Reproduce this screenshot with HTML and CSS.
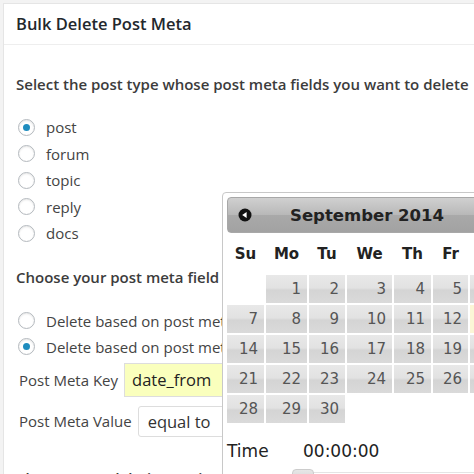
FILE: index.html
```html
<!DOCTYPE html>
<html>
<head>
<meta charset="utf-8">
<link rel="stylesheet" href="styles.css">
</head>
<body>
<div class="panel">
  <h3 class="panel-title">Bulk Delete Post Meta</h3>
  <div class="panel-body">
    <h4 class="section-title">Select the post type whose post meta fields you want to delete</h4>
    <ul class="radio-list">
      <li class="radio-row"><span class="radio checked"></span><span>post</span></li>
      <li class="radio-row"><span class="radio"></span><span>forum</span></li>
      <li class="radio-row"><span class="radio"></span><span>topic</span></li>
      <li class="radio-row"><span class="radio"></span><span>reply</span></li>
      <li class="radio-row"><span class="radio"></span><span>docs</span></li>
    </ul>
    <h4 class="section-title second">Choose your post meta field settings</h4>
    <ul class="radio-list meta-list">
      <li class="radio-row"><span class="radio"></span><span>Delete based on post meta key name only</span></li>
      <li class="radio-row"><span class="radio checked"></span><span>Delete based on post meta key name and value</span></li>
    </ul>
    <div class="field-row key-row">
      <span class="field-label">Post Meta Key</span>
      <span class="text-input autofill">date_from</span>
    </div>
    <div class="field-row value-row">
      <span class="field-label">Post Meta Value</span>
      <span class="select-box">equal to</span>
    </div>
    <h4 class="section-title third">Choose your deletion options</h4>
  </div>
</div>

<div class="datepicker">
  <div class="dp-header">
    <span class="dp-prev">
      <svg width="14" height="14" viewBox="0 0 14 14"><circle cx="7" cy="7" r="6.5" fill="#111"/><path d="M4.2 7 L8.6 3.9 L8.6 10.1 Z" fill="#fff"/></svg>
    </span>
    <span class="dp-title">September 2014</span>
  </div>
  <div class="dp-grid dp-days">
    <span>Su</span><span>Mo</span><span>Tu</span><span>We</span><span>Th</span><span>Fr</span><span>Sa</span>
  </div>
  <div class="dp-grid dp-cells">
    <span class="empty"></span><span class="day">1</span><span class="day">2</span><span class="day">3</span><span class="day">4</span><span class="day">5</span><span class="day">6</span>
    <span class="day">7</span><span class="day">8</span><span class="day">9</span><span class="day">10</span><span class="day">11</span><span class="day">12</span><span class="day today">13</span>
    <span class="day">14</span><span class="day">15</span><span class="day">16</span><span class="day">17</span><span class="day">18</span><span class="day">19</span><span class="day">20</span>
    <span class="day">21</span><span class="day">22</span><span class="day">23</span><span class="day">24</span><span class="day">25</span><span class="day">26</span><span class="day">27</span>
    <span class="day">28</span><span class="day">29</span><span class="day">30</span><span class="empty"></span><span class="empty"></span><span class="empty"></span><span class="empty"></span>
  </div>
  <div class="dp-time">
    <span class="dp-time-label">Time</span>
    <span class="dp-time-value">00:00:00</span>
  </div>
  <div class="dp-slider"><span class="dp-handle"></span></div>
</div>
</body>
</html>
```

FILE: styles.css
```css
html, body {
  margin: 0;
  padding: 0;
}
body {
  background: #f3f3f3;
  width: 474px;
  height: 474px;
  overflow: hidden;
  position: relative;
  font-family: "Open Sans", "Liberation Sans", sans-serif;
  color: #444;
}
.panel {
  margin: 3px 0 0 3px;
  width: 640px;
  height: 600px;
  background: #fff;
  border: 1px solid #e5e5e5;
}
.panel-title {
  margin: 0;
  padding: 10px 12px;
  font-size: 16.5px;
  line-height: 20px;
  font-weight: 600;
  color: #23282d;
  border-bottom: 1px solid #eee;
}
.panel-body {
  padding: 0 12px;
}
.section-title {
  margin: 29px 0 0;
  font-size: 15px;
  line-height: 20px;
  font-weight: 600;
  color: #3c3c3c;
}
.section-title.second {
  margin-top: 20px;
}
.section-title.third {
  margin-top: 31px;
}
.radio-list {
  list-style: none;
  margin: 20px 0 0 2px;
  padding: 0;
}
.meta-list {
  margin-top: 21px;
}
.radio-row {
  display: flex;
  align-items: center;
  gap: 11px;
  height: 26.5px;
  font-size: 15px;
  color: #444;
}
.meta-list .radio-row {
  height: 26px;
}
.radio {
  width: 17px;
  height: 17px;
  box-sizing: border-box;
  border: 1px solid #b4b9be;
  border-radius: 50%;
  background: #fff;
  box-shadow: inset 0 1px 2px rgba(0,0,0,.1);
  display: flex;
  align-items: center;
  justify-content: center;
  flex: none;
}
.radio.checked::after {
  content: "";
  width: 7px;
  height: 7px;
  border-radius: 50%;
  background: #1e8cbe;
}
.field-row {
  display: flex;
  align-items: center;
  gap: 6px;
  margin-left: 3px;
  font-size: 15px;
  color: #444;
}
.key-row {
  margin-top: 3px;
}
.value-row {
  margin-top: 9px;
}
.text-input {
  height: 34px;
  box-sizing: border-box;
  padding: 0 7px;
  display: flex;
  align-items: center;
  border: 1px solid #ddd;
  font-size: 16.5px;
  color: #222;
  width: 200px;
}
.autofill {
  background: #faffbd;
}
.select-box {
  height: 31px;
  box-sizing: border-box;
  padding: 0 9px;
  display: flex;
  align-items: center;
  border: 1px solid #ddd;
  border-radius: 3px;
  font-size: 16.5px;
  color: #333;
  width: 200px;
  background: #fff;
}

/* datepicker popup */
.datepicker {
  position: absolute;
  left: 222px;
  top: 192px;
  width: 290px;
  height: 320px;
  box-sizing: border-box;
  padding: 4px;
  background: #fff;
  border: 1px solid #c8c8c8;
  border-radius: 4px;
  font-family: "DejaVu Sans", Verdana, sans-serif;
}
.dp-header {
  height: 36px;
  box-sizing: border-box;
  border: 1px solid #a8a8a8;
  border-radius: 4px;
  background: linear-gradient(#d0d0d0, #b8b8b8 50%, #a9a9a9 51%, #a2a2a2);
  display: flex;
  align-items: center;
  position: relative;
}
.dp-prev {
  display: flex;
  margin-left: 10px;
}
.dp-title {
  position: absolute;
  left: 0;
  right: 0;
  text-align: center;
  font-weight: bold;
  font-size: 16.5px;
  color: #222;
}
.dp-grid {
  display: grid;
  grid-template-columns: 37px 41px 36px 45px 37px 35px 38px;
  column-gap: 2px;
}
.dp-days {
  height: 42px;
  align-items: center;
  font-weight: bold;
  font-size: 15px;
  color: #222;
  text-align: center;
}
.dp-cells {
  grid-auto-rows: 28px;
  row-gap: 2px;
}
.day {
  background: linear-gradient(#e8e8e8 0%, #e2e2e2 46%, #d4d4d4 54%, #dadada 100%);
  text-align: right;
  padding-right: 6px;
  font-size: 15px;
  line-height: 28px;
  color: #555;
}
.day.today {
  background: #fbf6d6;
}
.dp-time {
  display: flex;
  align-items: center;
  margin-top: 16px;
  height: 24px;
  font-size: 17px;
  color: #222;
}
.dp-time-label {
  width: 76px;
}
.dp-slider {
  position: relative;
  margin: 9px 0 0 68px;
  height: 8px;
  border-top: 1px solid #e4e4e4;
}
.dp-handle {
  position: absolute;
  left: -3px;
  top: -4px;
  width: 22px;
  height: 16px;
  box-sizing: border-box;
  border: 1px solid #ccc;
  border-radius: 4px;
  background: linear-gradient(#e6e6e6, #d3d3d3);
}
```
